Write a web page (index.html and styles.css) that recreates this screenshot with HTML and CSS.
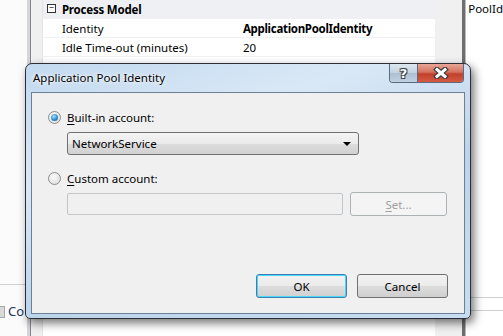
FILE: index.html
```html
<!DOCTYPE html>
<html lang="en">
<head>
  <meta charset="UTF-8" />
  <title>Application Pool Identity</title>
  <link rel="stylesheet" href="styles.css">
</head>
<body>

  <div class="desk">
    <div class="side-left">
      <div class="side-spacer"></div>
      <div class="side-status"><span class="doc-icon"></span>Co</div>
    </div>

    <div class="grid">
      <div class="grid-row group">
        <div class="margin"><span class="toggle">−</span></div>
        <div class="name">Process Model</div>
      </div>
      <div class="grid-row">
        <div class="margin"></div>
        <div class="name">Identity</div>
        <div class="value strong">ApplicationPoolIdentity</div>
      </div>
      <div class="grid-row">
        <div class="margin"></div>
        <div class="name">Idle Time-out (minutes)</div>
        <div class="value">20</div>
      </div>
      <div class="grid-row">
        <div class="margin"></div>
        <div class="name">Load User Profile</div>
        <div class="value">True</div>
      </div>
      <div class="grid-fill">
        <div class="margin"></div>
      </div>
    </div>

    <div class="side-mid"></div>

    <div class="side-right">
      <div class="peek">PoolId</div>
      <div class="side-spacer"></div>
      <div class="rule"></div>
      <div class="rule"></div>
    </div>
  </div>

  <div class="dialog">
    <div class="titlebar">
      <div class="title">Application Pool Identity</div>
      <div class="caption-btns">
        <div class="cap help">?</div>
        <div class="cap close">
          <svg width="16" height="12" viewBox="0 0 16 12">
            <path d="M4 2.5 L12 9.5 M12 2.5 L4 9.5" stroke="#3b3b3b" stroke-width="5.4" stroke-linecap="square"/>
            <path d="M4 2.5 L12 9.5 M12 2.5 L4 9.5" stroke="#fff" stroke-width="3" stroke-linecap="square"/>
          </svg>
        </div>
      </div>
    </div>

    <div class="client">
      <label class="option">
        <span class="radio checked"></span>
        <span><u>B</u>uilt-in account:</span>
      </label>
      <div class="select">
        <span>NetworkService</span>
        <span class="arrow"></span>
      </div>

      <label class="option second">
        <span class="radio"></span>
        <span><u>C</u>ustom account:</span>
      </label>
      <div class="custom-row">
        <div class="textbox"></div>
        <button class="btn disabled"><u>S</u>et...</button>
      </div>

      <div class="actions">
        <button class="btn default">OK</button>
        <button class="btn">Cancel</button>
      </div>
    </div>
  </div>

</body>
</html>
```

FILE: styles.css
```css
* { box-sizing: border-box; margin: 0; padding: 0; }
body {
  width: 503px;
  height: 336px;
  overflow: hidden;
  background: #fff;
  font-family: "Noto Sans", sans-serif;
  font-size: 11.5px;
  color: #000;
  position: relative;
}

/* background window */
.desk {
  display: flex;
  height: 336px;
}
.side-left {
  width: 30px;
  display: flex;
  flex-direction: column;
  background: #fbfbfb;
  border-right: 3px solid #d6d6d6;
}
.side-spacer {
  flex: 1;
}
.side-status {
  height: 38px;
  margin-bottom: 14px;
  border-top: 1px solid #cfcfcf;
  padding: 17px 0 0 8px;
  color: #1e395b;
  font-size: 13px;
  position: relative;
}
.doc-icon {
  position: absolute;
  left: 0;
  top: 21px;
  width: 5px;
  height: 12px;
  background: #d8d8d8;
  border: 1px solid #a8a8a8;
  border-left: none;
}
.grid {
  width: 407px;
  border-left: 1px solid #828790;
  display: flex;
  flex-direction: column;
}
.grid-row {
  display: flex;
  height: 19px;
  align-items: center;
  border-bottom: 1px solid #f0f0f0;
}
.margin {
  width: 12px;
  align-self: stretch;
  background: #f0f0f0;
  border-right: 1px solid #e3e3e3;
  position: relative;
}
.grid-fill {
  flex: 1;
  display: flex;
}
.name {
  width: 198px;
  padding-left: 19px;
  white-space: nowrap;
}
.value {
  padding-left: 2px;
  white-space: nowrap;
}
.strong {
  font-weight: bold;
  letter-spacing: -0.3px;
}
.group {
  background: #eef0f3;
}
.group .name {
  font-weight: bold;
  width: auto;
  letter-spacing: -0.2px;
}
.toggle {
  position: absolute;
  left: 16px;
  top: 4px;
  width: 9px;
  height: 9px;
  border: 1px solid #333;
  font-size: 9px;
  line-height: 6px;
  text-align: center;
  background: #fff;
}
.side-mid {
  width: 30px;
  background: #f0f0f0;
  border-right: 3px solid #6e6e6e;
}
.side-right {
  flex: 1;
  display: flex;
  flex-direction: column;
  background: #fff;
  border-left: 1px solid #bbb;
}
.peek {
  padding: 1px 0 0 2px;
  height: 18px;
  white-space: nowrap;
  overflow: hidden;
}
.rule {
  height: 13px;
  border-top: 1px solid #cfcfcf;
}
.side-right .rule:last-child {
  height: 26px;
}

/* dialog window */
.dialog {
  position: absolute;
  left: 25px;
  top: 63px;
  width: 446px;
  height: 256px;
  border: 1px solid #2b2f33;
  border-radius: 7px 7px 5px 5px;
  background: linear-gradient(160deg, #c2d9ef 0%, #d9e8f6 30%, #bcd4ec 60%, #c8ddf1 100%);
  box-shadow: 3px 4px 10px rgba(0, 0, 0, 0.55);
  padding: 0 5px 4px 5px;
  display: flex;
  flex-direction: column;
}
.titlebar {
  height: 28px;
  display: flex;
  align-items: flex-start;
  justify-content: space-between;
}
.title {
  padding: 6px 0 0 2px;
  font-size: 11.5px;
  text-shadow: 0 0 6px #fff, 0 0 3px #fff;
}
.caption-btns {
  display: flex;
  margin-right: 1px;
  border: 1px solid #5a6b80;
  border-top: none;
  border-radius: 0 0 4px 4px;
  overflow: hidden;
  height: 19px;
}
.cap {
  height: 18px;
  display: flex;
  align-items: center;
  justify-content: center;
}
.help {
  width: 28px;
  font-size: 13px;
  font-weight: bold;
  font-family: "DejaVu Sans", sans-serif;
  color: #fff;
  text-shadow: 1px 1px 0 #444, -1px -1px 0 #444, 1px -1px 0 #444, -1px 1px 0 #444;
  background: linear-gradient(#dde7f1, #c2d1e1 50%, #aebfd2 51%, #bfd0e2);
  border-right: 1px solid #5a6b80;
}
.close {
  width: 45px;
  background: linear-gradient(#e8a696, #d4725f 45%, #c2402c 55%, #d65a42);
}
.client {
  flex: 1;
  background: #f0f0f0;
  border: 1px solid #6d7f95;
  padding: 16px 16px 15px 16px;
  display: flex;
  flex-direction: column;
}
.option {
  display: flex;
  align-items: center;
  gap: 6px;
  height: 16px;
}
.option.second {
  margin-top: 15px;
}
u {
  text-decoration: underline;
  text-underline-offset: 2px;
}
.radio {
  width: 13px;
  height: 13px;
  border-radius: 50%;
  border: 1px solid #8d8d8d;
  background: radial-gradient(circle at 40% 35%, #fafafa, #d8d8d8);
  display: flex;
  align-items: center;
  justify-content: center;
}
.radio.checked::after {
  content: "";
  width: 7px;
  height: 7px;
  border-radius: 50%;
  background: radial-gradient(circle at 40% 35%, #a8e2fb, #2c8dcc 55%, #1b5a8a);
}
.select {
  margin: 7px 0 0 19px;
  width: 292px;
  height: 23px;
  border: 1px solid #707070;
  border-radius: 3px;
  background: linear-gradient(#f3f3f3, #ebebeb 50%, #dddddd 51%, #d1d1d1);
  display: flex;
  align-items: center;
  justify-content: space-between;
  padding: 0 7px 0 4px;
}
.arrow {
  width: 0;
  height: 0;
  border-left: 4px solid transparent;
  border-right: 4px solid transparent;
  border-top: 4px solid #000;
}
.custom-row {
  display: flex;
  align-items: center;
  gap: 7px;
  margin: 6px 0 0 19px;
}
.textbox {
  width: 276px;
  height: 22px;
  border: 1px solid #c2c6c9;
  border-radius: 2px;
  background: #f0f0f0;
}
.btn {
  width: 97px;
  height: 24px;
  border: 1px solid #707070;
  border-radius: 3px;
  background: linear-gradient(#f2f2f2, #ebebeb 50%, #dddddd 51%, #cfcfcf);
  font-family: inherit;
  font-size: 11.5px;
  color: #000;
}
.btn.disabled {
  background: #f4f4f4;
  border-color: #adb2b5;
  color: #a0a0a0;
}
.actions {
  margin-top: auto;
  display: flex;
  justify-content: flex-end;
  gap: 10px;
}
.actions .btn {
  width: 91px;
}
.btn.default {
  border-color: #3c7fb1;
  box-shadow: inset 0 0 0 1px #48d7fb;
}
```
